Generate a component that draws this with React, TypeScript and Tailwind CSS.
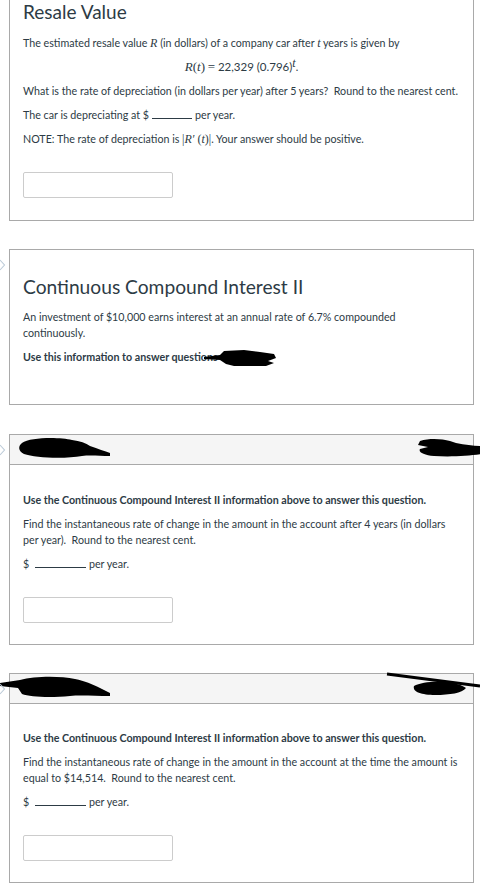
import type { ReactNode } from "react";

const lato = { fontFamily: "Lato, 'Open Sans', sans-serif" };
const serif = { fontFamily: "'Liberation Serif', 'DejaVu Serif', serif" };

const M = ({ children, big = false }: { children: ReactNode; big?: boolean }) => (
  <span className={`italic ${big ? "text-[13px]" : "text-[12px]"}`} style={serif}>
    {children}
  </span>
);

const S = ({ children, big = false }: { children: ReactNode; big?: boolean }) => (
  <span className={big ? "text-[13px]" : "text-[12px]"} style={serif}>
    {children}
  </span>
);

const Blank = ({ w }: { w: string }) => (
  <span className={`inline-block ${w} h-[9px] border-b border-[#2d3b45] mx-[3px]`} />
);

const Marker = ({ top }: { top: string }) => (
  <svg className={`absolute left-[-10px] ${top}`} width="6" height="12" viewBox="0 0 6 12">
    <path d="M0 1 L4.5 6 L0 11" fill="none" stroke="#bccbd8" strokeWidth="1.1" />
  </svg>
);

const AnswerBox = () => (
  <div className="w-[150px] h-[26px] border border-[#cccccc] rounded-[2px] bg-white" />
);

const Card = ({ header, children, className = "" }: { header?: ReactNode; children: ReactNode; className?: string }) => (
  <div className={`relative border border-[#a9a9a9] bg-white ${className}`}>
    {header}
    {children}
  </div>
);

const QuestionHeader = ({ children }: { children: ReactNode }) => (
  <div className="relative h-[30px] bg-[#f5f5f5] border-b border-[#a9a9a9]">
    <svg className="absolute left-0 top-0 overflow-visible" width="463" height="30" viewBox="0 0 463 30">
      {children}
    </svg>
  </div>
);

export default function App() {
  return (
    <div className="min-h-[883px] bg-white pl-[9px] pr-[6px] pb-[40px] text-[#2d3b45] overflow-hidden" style={lato}>
      {/* Resale Value */}
      <Card className="border-t-0 px-[13px] pb-[22px]">
        <h2 className="text-[19px] leading-[24px]">Resale Value</h2>
        <div className="mt-[11px] flex flex-col gap-[8px] text-[10.7px] leading-[16px]">
          <p>
            The estimated resale value <M>R</M> (in dollars) of a company car after <M>t</M> years is given by
          </p>
          <p className="text-center">
            <M big>R</M>
            <S big>(</S>
            <M big>t</M>
            <S big>)</S> <S big>=</S> <span className="text-[11.5px]">22,329 (0.796)</span>
            <sup className="text-[8px]">
              <M>t</M>
            </sup>
            .
          </p>
          <p>What is the rate of depreciation (in dollars per year) after 5 years?&nbsp; Round to the nearest cent.</p>
          <p>
            The car is depreciating at $<Blank w="w-[40px]" />
            per year.
          </p>
          <p>
            NOTE: The rate of depreciation is <S>|</S>
            <M>R′</M>
            <S> (</S>
            <M>t</M>
            <S>)|</S>. Your answer should be positive.
          </p>
        </div>
        <div className="mt-[25px]">
          <AnswerBox />
        </div>
      </Card>

      {/* Continuous Compound Interest II */}
      <Card className="mt-[28px] px-[13px] pt-[25px] pb-[37px]">
        <Marker top="top-[9px]" />
        <h2 className="text-[19.2px] leading-[24px]">Continuous Compound Interest II</h2>
        <div className="mt-[10px] flex flex-col gap-[8px] text-[10.7px] leading-[16px]">
          <p className="pr-[50px]">An investment of $10,000 earns interest at an annual rate of 6.7% compounded continuously.</p>
          <p className="font-bold">
            Use this information to answer questions
            <svg className="inline-block align-middle -ml-[14px]" width="72" height="18" viewBox="0 0 72 18">
              <path
                d="M0 8 L 16 6 L 20 2 L 40 1 L 56 3 L 70 5 L 72 9 L 64 12 L 70 14 L 62 17 L 30 17 L 22 15 L 16 11 L 0 10 Z"
                fill="#000"
              />
            </svg>
          </p>
        </div>
      </Card>

      {/* Question 1 */}
      <Card
        className="mt-[29px]"
        header={
          <QuestionHeader>
            <path
              d="M12 8 C 20 2, 50 2, 62 5 C 70 6, 76 8, 80 11 C 88 14, 95 16, 100 18 L 100 21 C 90 21, 80 20, 72 21 C 55 24, 25 23, 14 19 C 8 16, 8 11, 12 8 Z"
              fill="#000"
            />
            <path
              d="M410 6 C 420 3, 432 4, 440 6 L 446 8 C 456 10, 464 11, 472 11 L 472 19 C 460 21, 440 22, 424 21 C 414 20, 408 17, 410 14 L 418 12 L 408 10 Z"
              fill="#000"
            />
          </QuestionHeader>
        }
      >
        <Marker top="top-[9px]" />
        <div className="px-[13px] pt-[27px] pb-[21px]">
          <div className="flex flex-col gap-[8px] text-[10.7px] leading-[16px]">
            <p className="font-bold">Use the Continuous Compound Interest II information above to answer this question.</p>
            <p>
              Find the instantaneous rate of change in the amount in the account after 4 years (in dollars per year).&nbsp; Round
              to the nearest cent.
            </p>
            <p>
              $ <Blank w="w-[51px]" />
              per year.
            </p>
          </div>
          <div className="mt-[25px]">
            <AnswerBox />
          </div>
        </div>
      </Card>

      {/* Question 2 */}
      <Card
        className="mt-[28px]"
        header={
          <QuestionHeader>
            <path
              d="M-10 9 L 10 6 C 25 2, 50 2, 65 5 C 75 7, 82 10, 90 14 L 100 19 L 100 22 C 85 22, 70 21, 60 22 C 40 24, 20 23, 12 20 L 8 14 L -10 12 Z"
              fill="#000"
            />
            <path d="M377 0 L 470 12" stroke="#000" strokeWidth="3" />
            <path
              d="M404 12 C 410 8, 425 7, 435 8 C 445 9, 452 11, 456 14 C 452 19, 440 21, 425 21 C 412 21, 402 18, 404 12 Z"
              fill="#000"
            />
          </QuestionHeader>
        }
      >
        <Marker top="top-[9px]" />
        <div className="px-[13px] pt-[26px] pb-[21px]">
          <div className="flex flex-col gap-[8px] text-[10.7px] leading-[16px]">
            <p className="font-bold">Use the Continuous Compound Interest II information above to answer this question.</p>
            <p>
              Find the instantaneous rate of change in the amount in the account at the time the amount is equal to
              $14,514.&nbsp; Round to the nearest cent.
            </p>
            <p>
              $ <Blank w="w-[51px]" />
              per year.
            </p>
          </div>
          <div className="mt-[25px]">
            <AnswerBox />
          </div>
        </div>
      </Card>
    </div>
  );
}
